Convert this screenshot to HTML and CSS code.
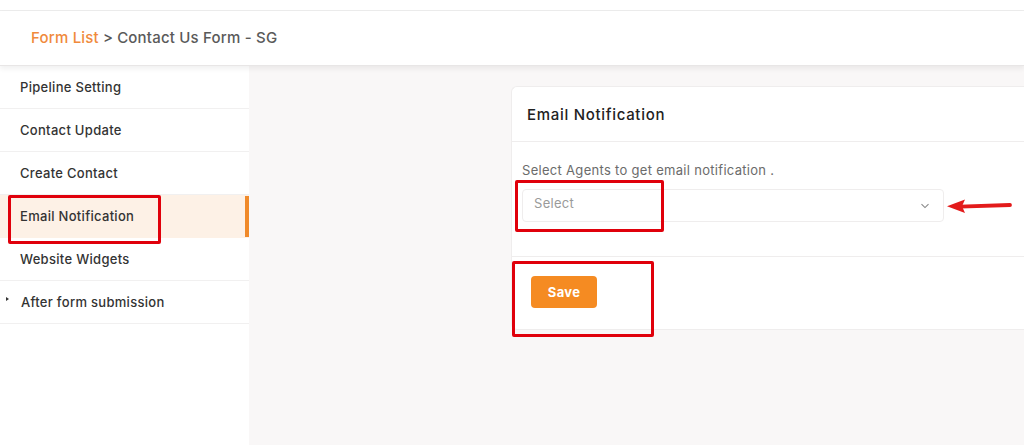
FILE: index.html
```html
<!DOCTYPE html>
<html>
<head>
<meta charset="utf-8">
<link rel="stylesheet" href="styles.css">
</head>
<body>
<div class="topstrip"></div>
<header class="header">
  <span class="crumb-link">Form List</span><span class="crumb-sep">&gt;</span><span class="crumb-current">Contact Us Form - SG</span>
</header>
<div class="layout">
  <aside class="sidebar">
    <div class="nav-item">Pipeline Setting</div>
    <div class="nav-item">Contact Update</div>
    <div class="nav-item">Create Contact</div>
    <div class="nav-item active">Email Notification
      <span class="mark mark-nav"></span>
    </div>
    <div class="nav-item">Website Widgets</div>
    <div class="nav-item caret">After form submission</div>
  </aside>
  <main class="main">
    <section class="card">
      <div class="card-head">Email Notification</div>
      <div class="card-body">
        <div class="label">Select Agents to get email notification .</div>
        <div class="select">
          <span class="placeholder">Select</span>
          <svg class="chev" width="10" height="6" viewBox="0 0 10 6"><path d="M1.5 1.2 L5 4.6 L8.5 1.2" fill="none" stroke="#888" stroke-width="1.1"/></svg>
          <span class="mark mark-select"></span>
          <svg class="arrow" width="66" height="16" viewBox="0 0 66 16"><path d="M64 7 L14 8.6" stroke="#e31b1b" stroke-width="3.8" stroke-linecap="round"/><path d="M1 8.3 L19 1.5 L16 8.3 L19 15 Z" fill="#e31b1b"/></svg>
        </div>
      </div>
      <div class="card-foot">
        <button class="btn">Save</button>
        <span class="mark mark-save"></span>
      </div>
    </section>
  </main>
</div>
</body>
</html>
```

FILE: styles.css
```css
* { box-sizing: border-box; }
html, body { margin: 0; padding: 0; }
body {
  width: 1024px;
  height: 446px;
  overflow: hidden;
  font-family: "Inter", "Noto Sans", "Liberation Sans", sans-serif;
  background: #ffffff;
  color: #333;
}
.topstrip {
  height: 11px;
  background: #fff;
  border-bottom: 1px solid #ececec;
}
.header {
  height: 55px;
  padding-left: 31px;
  display: flex;
  align-items: center;
  font-size: 15px;
  font-weight: 500;
  letter-spacing: 0.2px;
  color: #5d5d5d;
  border-bottom: 1px solid #e8e6e6;
  position: relative;
  z-index: 2;
  box-shadow: 0 3px 5px rgba(0,0,0,0.06);
  padding-bottom: 1px;
}
.crumb-link { color: #f08a3c; }
.crumb-sep { margin: 0 4px 0 4px; color: #555; }
.crumb-current { color: #5a5a5a; }
.layout {
  display: flex;
  height: 379px;
}
.sidebar {
  width: 249px;
  background: #fff;
  flex: none;
}
.nav-item {
  position: relative;
  height: 43px;
  display: flex;
  align-items: center;
  padding-left: 20px;
  font-size: 13px;
  font-weight: 500;
  letter-spacing: 0.3px;
  color: #333;
  border-bottom: 1px solid #f1f0f0;
}
.nav-item.active {
  background: #fdf1e6;
  border-bottom-color: #fdf1e6;
}
.nav-item.active::after {
  content: "";
  position: absolute;
  right: 0;
  top: 1px;
  width: 4px;
  height: 41px;
  background: #f08a2a;
}
.nav-item.caret { padding-left: 21px; }
.nav-item.caret::before {
  content: "";
  position: absolute;
  left: 6px;
  top: 16px;
  border-left: 3px solid #333;
  border-top: 2.5px solid transparent;
  border-bottom: 2.5px solid transparent;
}
.main {
  flex: 1;
  background: #f9f7f7;
  padding: 20px 0 0 262px;
}
.card {
  background: #fff;
  border: 1px solid #efeded;
  border-right: none;
  border-radius: 6px 0 0 6px;
  width: 520px;
}
.card-head {
  height: 55px;
  display: flex;
  align-items: center;
  padding-left: 15px;
  font-size: 15px;
  font-weight: 500;
  letter-spacing: 0.7px;
  color: #222;
  border-bottom: 1px solid #efeded;
}
.card-body {
  padding: 19px 0 34px 10px;
  border-bottom: 1px solid #efeded;
}
.label {
  font-size: 13px;
  letter-spacing: 0.3px;
  color: #6b6b6b;
  height: 18px;
  line-height: 18px;
}
.select {
  position: relative;
  margin-top: 10px;
  width: 422px;
  height: 33px;
  border: 1px solid #efeded;
  border-radius: 4px;
  display: flex;
  align-items: center;
  padding-left: 11px;
  padding-bottom: 5px;
}
.placeholder { font-size: 13px; color: #9a9a9a; letter-spacing: 0.3px; }
.chev { position: absolute; right: 13px; top: 13px; }
.arrow { position: absolute; left: 423px; top: 8px; }
.card-foot {
  position: relative;
  height: 72px;
  padding: 19px 0 0 19px;
}
.btn {
  width: 66px;
  height: 32px;
  background: #f58b22;
  color: #fff;
  border: none;
  border-radius: 4px;
  font-family: inherit;
  font-size: 13px;
  font-weight: 700;
  letter-spacing: 0.3px;
  padding: 0;
}
.mark {
  position: absolute;
  border: 3px solid #e0000b;
  border-radius: 2px;
  pointer-events: none;
}
.mark-nav { left: 8px; top: 0; width: 153px; height: 49px; }
.mark-select { left: -8px; top: -10px; width: 149px; height: 52px; }
.mark-save { left: 0; top: 4px; width: 142px; height: 76px; }
```
